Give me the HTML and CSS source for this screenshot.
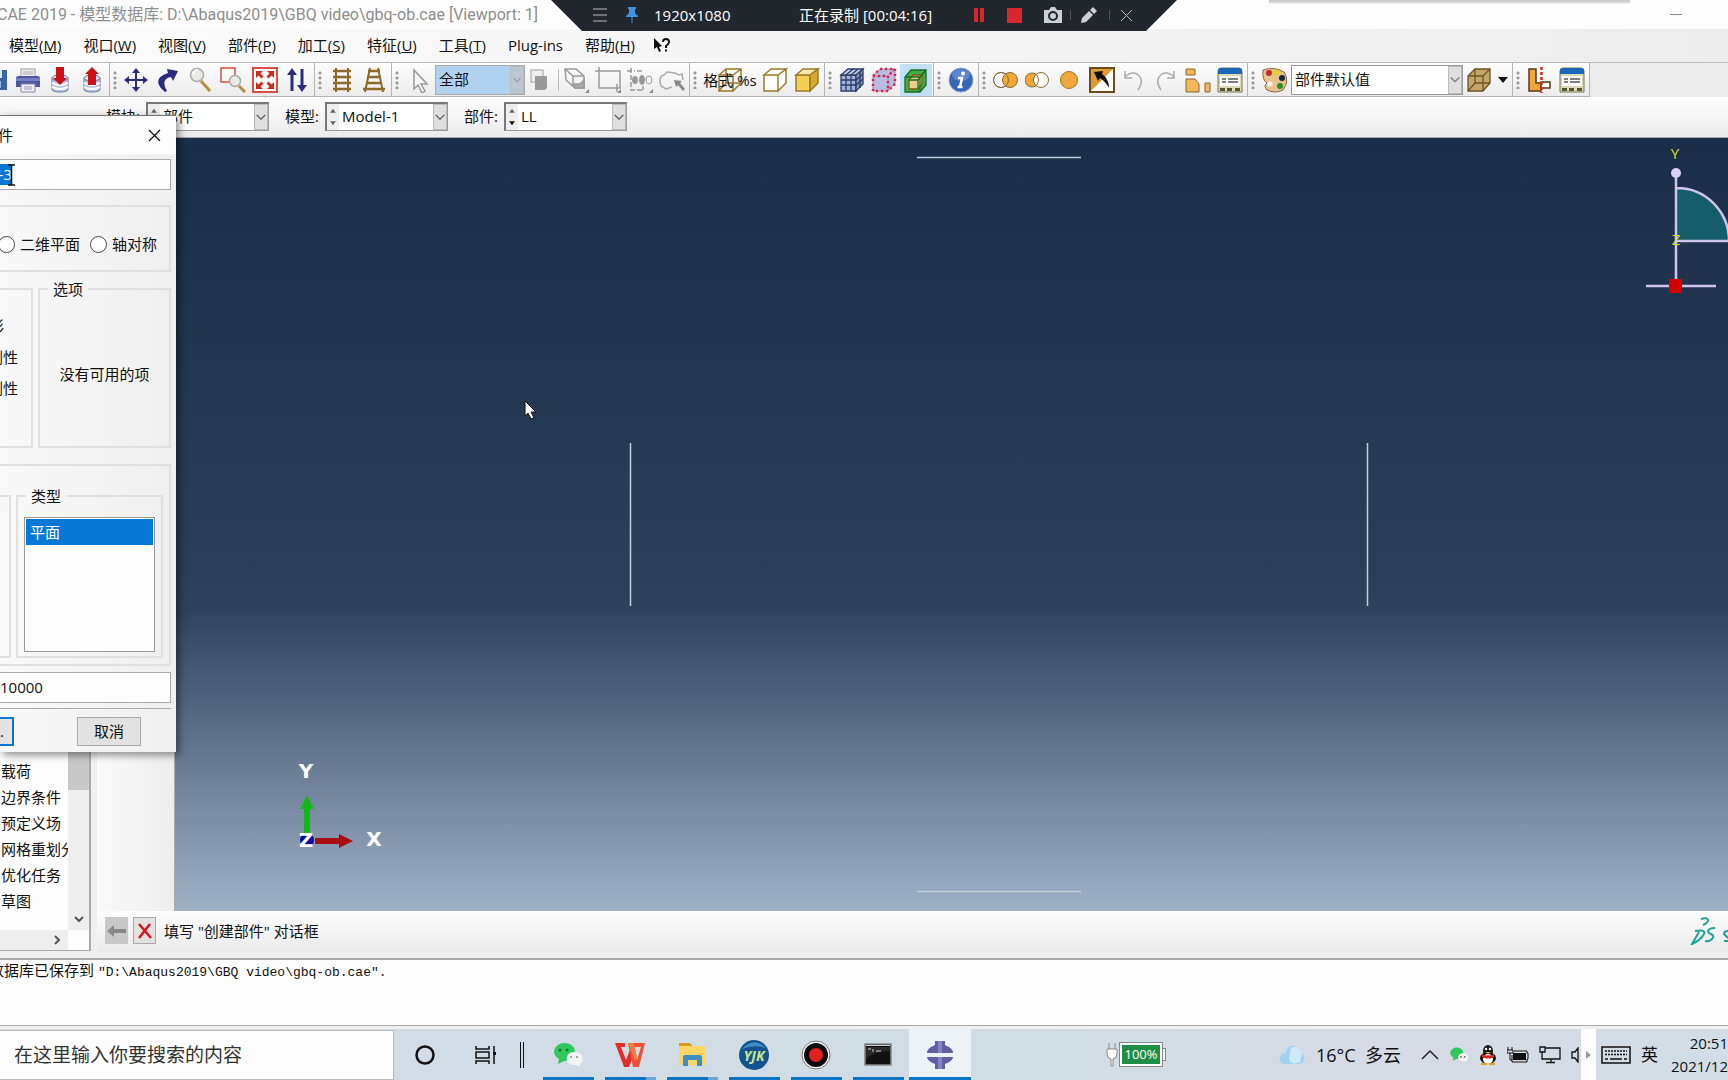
FILE: index.html
```html
<!DOCTYPE html>
<html lang="zh-CN">
<head>
<meta charset="utf-8">
<title>Abaqus/CAE 2019</title>
<link rel="stylesheet" href="styles.css">
</head>
<body>
<header class="titlebar">
  <h1 class="title">CAE 2019 - 模型数据库: D:\Abaqus2019\GBQ video\gbq-ob.cae [Viewport: 1]</h1>
  <button class="minimise" aria-label="最小化"><svg width="60" height="16" viewBox="0 0 60 16"><path d="M1 7.500h12M59.500 3v10" stroke="#888" fill="none"/></svg></button>
</header>
<nav class="menubar">
  <button>模型(<u>M</u>)</button><button>视口(<u>W</u>)</button><button>视图(<u>V</u>)</button><button>部件(<u>P</u>)</button><button>加工(<u>S</u>)</button><button>特征(<u>U</u>)</button><button>工具(<u>T</u>)</button><button>Plug-ins</button><button>帮助(<u>H</u>)</button>
  <button aria-label="上下文帮助"><svg width="18" height="16" viewBox="0 0 18 16"><path d="M1 1v11l3-2 2 5 2-1-2-4 3-1z" fill="#111"/><path d="M10 5q0-3 3-3t3 3q0 2-3 4v2M13 12.500v2" stroke="#111" stroke-width="2" fill="none"/></svg></button>
</nav>

<div class="toolbar">
  <div class="group first">
    <button aria-label="保存"><svg viewBox="0 0 26 26"><path d="M2 3h22v20H2z" fill="#3c62a8"/><path d="M7 3h12v8H7z" fill="#dde6f4"/><path d="M6 14h12v7H6z" fill="#9db4da"/></svg></button>
    <button aria-label="打印"><svg viewBox="0 0 26 26"><path d="M6 2h14v8H6z" fill="#eee" stroke="#999"/><path d="M8 5h10M8 7h10" stroke="#aaa"/><path d="M1 11q0-2 3-2h18q3 0 3 2v9H1z" fill="#4d56a0"/><path d="M1 11h24v3H1z" fill="#777dc0"/><path d="M6 17h14v8H6z" fill="#eef" stroke="#889"/><path d="M9 20h8M9 22h8" stroke="#99a"/></svg></button>
    <button aria-label="导入"><svg viewBox="0 0 26 26"><path d="M5 11v11q0 3 8 3t8-3V11z" fill="#b9c8df" stroke="#6a7ba0"/><path d="M5 16q8 4 16 0M5 20q8 4 16 0" stroke="#fff" stroke-width="2" fill="none"/><ellipse cx="13" cy="11" rx="8" ry="3" fill="#dbe4f1" stroke="#6a7ba0"/><path d="M9 0h8v11h3l-7 7-7-7h3z" fill="#cc1118"/></svg></button>
    <button aria-label="导出"><svg viewBox="0 0 26 26"><path d="M5 11v11q0 3 8 3t8-3V11z" fill="#b9c8df" stroke="#6a7ba0"/><path d="M5 16q8 4 16 0M5 20q8 4 16 0" stroke="#fff" stroke-width="2" fill="none"/><ellipse cx="13" cy="11" rx="8" ry="3" fill="#dbe4f1" stroke="#6a7ba0"/><path d="M13 0l7 7h-3v11H9V7H6z" fill="#cc1118"/></svg></button>
  </div>
  <div class="group">
    <i class="grip"></i>
    <button aria-label="平移"><svg viewBox="0 0 26 26"><path d="M12 4v18M3 13h18" stroke="#2b2c7c" stroke-width="2"/><path d="M12 1l4 5H8zM12 25l4-5H8zM0 13l5-4v8zM24 13l-5-4v8z" fill="#2b2c7c"/></svg></button>
    <button aria-label="旋转"><svg viewBox="0 0 26 26"><path d="M9 25Q-6 12 12 6L11 2l11 2-5 10-2-4Q4 12 11 24z" fill="#2b2c7c"/></svg></button>
    <button aria-label="缩放"><svg viewBox="0 0 26 26"><path d="M13 14l9 10" stroke="#b98b3c" stroke-width="3"/><circle cx="9" cy="8" r="6.500" fill="#e9eae6" stroke="#aaa" stroke-width="1.500"/><path d="M5 7q1-4 5-4" stroke="#fff" stroke-width="2" fill="none"/></svg></button>
    <button aria-label="框选缩放"><svg viewBox="0 0 26 26"><path d="M1 1h14v14H1z" fill="none" stroke="#dc4d42" stroke-width="1.500"/><path d="M19 19l6 6" stroke="#b98b3c" stroke-width="3"/><circle cx="15" cy="14" r="5.500" fill="#e9eae6" stroke="#aaa" stroke-width="1.500"/></svg></button>
    <button aria-label="适应窗口"><svg viewBox="0 0 26 26"><path d="M1 1h24v24H1z" fill="#fff" stroke="#dc4d42" stroke-width="2"/><path d="M4 4h7L8.500 6.500l3 3-2 2-3-3L4 11zM22 4h-7l2.500 2.500-3 3 2 2 3-3L22 11zM4 22h7l-2.500-2.500 3-3-2-2-3 3L4 15zM22 22h-7l2.500-2.500-3-3 2-2 3 3L22 15z" fill="#d2281d"/></svg></button>
    <button aria-label="循环视图"><svg viewBox="0 0 26 26"><path d="M8 6v18M18 2v17" stroke="#2b2c7c" stroke-width="3"/><path d="M8 1l5 7H3zM18 25l5-7H13z" fill="#2b2c7c"/></svg></button>
  </div>
  <div class="group">
    <i class="grip"></i>
    <button aria-label="平行"><svg viewBox="0 0 26 26"><path d="M7 1v24M19 1v24" stroke="#8c6a28" stroke-width="2"/><path d="M4 4h18M4 10h18M4 16h18M4 22h18" stroke="#8c6a28" stroke-width="2.500"/></svg></button>
    <button aria-label="透视"><svg viewBox="0 0 26 26"><path d="M9 1L4 25M17 1l5 24" stroke="#8c6a28" stroke-width="2"/><path d="M7 4h12M6 10h14M5 16h16M2 22h22" stroke="#8c6a28" stroke-width="2.500"/></svg></button>
  </div>
  <div class="group">
    <i class="grip"></i>
    <button aria-label="选择"><svg viewBox="0 0 26 26"><path d="M8 3v19l4-4 4 8 3-2-4-7h6z" fill="#f5f5f5" stroke="#999" stroke-width="1.500"/></svg></button>
    <span class="combo filter"><select aria-label="选择过滤"><option>全部</option></select><svg class="chev" viewBox="0 0 14 24"><path d="M3 10l4 4 4-4" fill="none" stroke="#999" stroke-width="1.500"/></svg></span>
    <button aria-label="遮挡"><svg viewBox="0 0 26 26"><path d="M3 3h12v12H3z" fill="#eee" stroke="#bbb" stroke-width="1.500"/><path d="M7 9h12v12l-2 2H7z" fill="#999"/></svg></button>
    <i class="sep"></i>
    <button aria-label="体选择"><svg viewBox="0 0 26 26" fill="none" stroke="#999" stroke-width="1.500"><path d="M2 2h11l8 7v12h-9l-9-8zM2 2l8 7h11M10 9v11"/><path d="M10 17h7l4-4v8h-9z" fill="#aaa"/><path d="M26 22v4h-4z" fill="#888" stroke="none"/></svg></button>
    <button aria-label="框形选择"><svg viewBox="0 0 26 26"><path d="M0 4h25v17M4 0v21h22M22 17v8" fill="none" stroke="#999" stroke-width="1.500"/><path d="M26 22v4h-4z" fill="#888"/></svg></button>
    <button aria-label="组选择"><svg viewBox="0 0 26 26"><path d="M0 4h8M4 1v22h12M10 4h6M16 23v-4" fill="none" stroke="#999" stroke-width="1.500" stroke-dasharray="5 2"/><ellipse cx="8" cy="13" rx="3" ry="4" fill="#999"/><ellipse cx="15" cy="13" rx="3" ry="5" fill="#999"/><ellipse cx="22" cy="13" rx="3" ry="4" fill="#fff" stroke="#999"/><path d="M26 22v4h-4z" fill="#888"/></svg></button>
    <button aria-label="套索"><svg viewBox="0 0 26 26"><path d="M2 19Q-1 9 5 8l3-3 8 1 4 2 3-1 1 6M2 19l5 3 6-2" fill="none" stroke="#aaa" stroke-width="1.500"/><path d="M15 13l8 1-2 2 5 6-2 2-5-6-2 2z" fill="#888"/></svg></button>
  </div>
  <div class="group">
    <i class="grip"></i>
    <button class="format" aria-label="线框"><svg viewBox="0 0 26 26" fill="none" stroke="#9b7b2c" stroke-width="1.500"><path d="M2 8h14v16H2zM9 2h15v14H9zM2 8l7-6M16 8l8-6M16 24l8-8M2 24l7-8"/></svg><span>格式 %s</span></button>
    <button aria-label="隐藏线"><svg viewBox="0 0 26 26" fill="#fff" stroke="#9b7b2c" stroke-width="1.500"><path d="M2 8h14v16H2zM2 8l7-6h15l-8 6zM24 2v14l-8 8V8z"/></svg></button>
    <button aria-label="阴影"><svg viewBox="0 0 26 26" stroke="#9b7b2c" stroke-width="1.500"><path d="M2 8h14v16H2z" fill="#f5cf55"/><path d="M2 8l7-6h15l-8 6z" fill="#fae9a5"/><path d="M24 2v14l-8 8V8z" fill="#d8a82e"/></svg></button>
  </div>
  <div class="group">
    <i class="grip"></i>
    <button aria-label="网格"><svg viewBox="0 0 26 26" stroke="#2d3d66" stroke-width="1.300"><path d="M2 8h15v16H2z" fill="#9fb3dc"/><path d="M2 8l7-6h15l-7 6z" fill="#c3d0ec"/><path d="M24 2v15l-7 7V8z" fill="#8095c4"/><path d="M7 8v16M12 8v16M2 13h15l7-6M2 18h15l7-6M7 8l7-6M12 8l7-6M21 5v16" fill="none"/></svg></button>
    <button aria-label="种子"><svg viewBox="0 0 26 26"><path d="M2 9l7-7h15v15l-7 7H2z" fill="#b5bde2"/><path d="M2 9h15v15H2zM2 9l7-7h15l-7 7M24 2v15l-7 7" fill="none" stroke="#d06a90"/><path d="M2 9h15v15H2zM2 9l7-7h15l-7 7M24 2v15l-7 7" fill="none" stroke="#c92950" stroke-width="2.500" stroke-dasharray="2 3"/></svg></button>
    <button class="on" aria-label="几何"><svg viewBox="0 0 26 26" stroke="#1b6a22" stroke-width="1.300"><path d="M2 10l6-7h15v15l-6 7H2z" fill="#3fae43"/><path d="M6 13l4-5h9v9l-4 5H6z" fill="#e7cf83" stroke="#7c5a1a"/><path d="M6 13h9v9M15 13l4-5M2 10h15v15M17 10l6-7" fill="none"/></svg></button>
  </div>
  <div class="group">
    <i class="grip"></i>
    <button aria-label="信息"><svg viewBox="0 0 26 26"><circle cx="13" cy="13" r="12" fill="#3766b5" stroke="#8aa6d8"/><ellipse cx="13" cy="8" rx="9" ry="6" fill="#5c86cb"/><path d="M10 11h4l-2 9M9.500 20h5" stroke="#fff" stroke-width="2.500" fill="none"/><circle cx="15" cy="6.500" r="2" fill="#fff"/></svg></button>
  </div>
  <div class="group">
    <i class="grip"></i>
    <button aria-label="并集"><svg viewBox="0 0 26 26" stroke="#8a6a30"><circle cx="8" cy="13" r="7.500" fill="#fff"/><circle cx="17" cy="13" r="7.500" fill="#f0a83a"/><circle cx="8" cy="13" r="7.500" fill="none"/></svg></button>
    <button aria-label="差集"><svg viewBox="0 0 26 26" stroke="#8a6a30"><circle cx="7" cy="13" r="7" fill="#f0a83a"/><circle cx="16" cy="13" r="7.500" fill="#fff"/><path d="M11 7q5 6 0 12" fill="none"/></svg></button>
    <button aria-label="全部显示"><svg viewBox="0 0 26 26"><circle cx="12" cy="13" r="8.500" fill="#f0a83a" stroke="#a87426"/></svg></button>
    <button aria-label="替换"><svg viewBox="0 0 26 26"><path d="M1 1h24v24H1z" fill="#fff" stroke="#6b4b1d" stroke-width="2"/><path d="M2 2h22L2 24z" fill="#e09a32"/><path d="M5 5l9-1-1 3q7 5 7 14-4-7-9-10l-2 3z" fill="#111"/></svg></button>
    <button aria-label="撤销"><svg viewBox="0 0 26 26" fill="none" stroke="#aaa" stroke-width="1.500"><path d="M4 4v7h7M4 10q6-6 12-3 8 6 1 16"/></svg></button>
    <button aria-label="重做"><svg viewBox="0 0 26 26" fill="none" stroke="#aaa" stroke-width="1.500"><path d="M21 4v7h-7M21 10q-6-6-12-3-8 6-1 16"/></svg></button>
    <button aria-label="部件显示"><svg viewBox="0 0 26 26" fill="#f3b65a" stroke="#8a6a30"><path d="M1 2h9v6H1zM1 12h9l4 5v8H1zM20 16h5v9h-5z"/></svg></button>
    <button aria-label="管理器"><svg viewBox="0 0 26 26"><path d="M1 4q0-3 3-3h18q3 0 3 3v21H1z" fill="#ddd9b8" stroke="#777753"/><path d="M1 7V4q0-3 3-3h18q3 0 3 3v3z" fill="#1c68b8"/><path d="M3 9h20v10H3z" fill="#fff"/><path d="M5 12h4M11 12h10M5 15h4M11 15h10" stroke="#555" stroke-width="1.500"/><path d="M3 21h5v3H3zM10 21h5v3h-5zM18 21h5v3h-5z" fill="#555530"/></svg></button>
  </div>
  <div class="group">
    <i class="grip"></i>
    <button aria-label="颜色"><svg viewBox="0 0 26 26"><path d="M1 3Q12-1 22 5q6 9-1 18-8 4-16 0-4-4 0-7-5-3-4-13z" fill="#e6c28d" stroke="#8a6a40"/><circle cx="7" cy="6" r="3" fill="#d32222"/><circle cx="14" cy="5.500" r="3" fill="#e8d02c"/><circle cx="20" cy="11" r="3" fill="#17254f"/><circle cx="18" cy="19" r="3" fill="#23902c"/><circle cx="8" cy="17" r="2.500" fill="#fff"/></svg></button>
    <span class="combo colour"><select aria-label="颜色映射"><option>部件默认值</option></select><svg class="chev" viewBox="0 0 14 24"><path d="M2 9l5 5 5-5" fill="none" stroke="#777" stroke-width="1.500"/></svg></span>
    <button aria-label="透明度"><svg viewBox="0 0 26 26" fill="#c2a66a" stroke="#6d5423" stroke-width="1.300"><path d="M2 9l7-7h15v14l-7 8H2z"/><path d="M2 9h15v15M17 9l7-7M9 2v14h15M9 16l-7 8" fill="none"/></svg></button>
    <button class="more" aria-label="更多"><svg width="10" height="6" viewBox="0 0 10 6"><path d="M0 0h10L5 6z" fill="#111"/></svg></button>
  </div>
  <div class="group">
    <i class="grip"></i>
    <button aria-label="基准"><svg viewBox="0 0 26 26"><path d="M2 2h7v14h5v8H2z" fill="#f0a83a" stroke="#553a12" stroke-width="1.500"/><path d="M14 15h9v6h-9z" fill="#fff" stroke="#553a12" stroke-width="1.500"/><path d="M14.500 0v26" stroke="#d22" stroke-width="2.500" stroke-dasharray="3 2"/></svg></button>
    <button aria-label="特征管理器"><svg viewBox="0 0 26 26"><path d="M1 4q0-3 3-3h18q3 0 3 3v21H1z" fill="#ddd9b8" stroke="#777753"/><path d="M1 7V4q0-3 3-3h18q3 0 3 3v3z" fill="#1c68b8"/><path d="M3 9h20v10H3z" fill="#fff"/><path d="M5 12h4M11 12h10M5 15h4M11 15h10" stroke="#555" stroke-width="1.500"/><path d="M3 21h5v3H3zM10 21h5v3h-5zM18 21h5v3h-5z" fill="#555530"/></svg></button>
  </div>
</div>

<div class="context">
  <label for="module">模块:</label>
  <span class="combo spin"><svg class="spinner" viewBox="0 0 12 27"><path d="M3 9l3-4 3 4zM3 18l3 4 3-4z" fill="#666"/></svg><select id="module"><option>部件</option></select><svg class="chev" viewBox="0 0 14 27"><path d="M2 11l5 5 5-5" fill="none" stroke="#555" stroke-width="1.500"/></svg></span>
  <label for="model">模型:</label>
  <span class="combo spin"><svg class="spinner" viewBox="0 0 12 27"><path d="M3 9l3-4 3 4zM3 18l3 4 3-4z" fill="#666"/></svg><select id="model"><option>Model-1</option></select><svg class="chev" viewBox="0 0 14 27"><path d="M2 11l5 5 5-5" fill="none" stroke="#555" stroke-width="1.500"/></svg></span>
  <label for="part">部件:</label>
  <span class="combo spin"><svg class="spinner" viewBox="0 0 12 27"><path d="M3 9l3-4 3 4z" fill="#666"/><path d="M3 18l3 4 3-4z" fill="#000"/></svg><select id="part"><option>LL</option></select><svg class="chev" viewBox="0 0 14 27"><path d="M2 11l5 5 5-5" fill="none" stroke="#555" stroke-width="1.500"/></svg></span>
</div>

<main class="work">
  <aside class="tree">
    <div class="tree-body">
      <ul><li>载荷</li><li>边界条件</li><li>预定义场</li><li>网格重划分</li><li>优化任务</li><li>草图</li></ul>
      <div class="vscroll"><div class="thumb"></div><svg width="12" height="8" viewBox="0 0 12 8"><path d="M2 1l4 4 4-4" fill="none" stroke="#555" stroke-width="2"/></svg></div>
    </div>
    <div class="hscroll"><svg width="8" height="12" viewBox="0 0 8 12"><path d="M1 2l4 4-4 4" fill="none" stroke="#555" stroke-width="2"/></svg></div>
  </aside>
  <section class="stage">
    <div class="stage-body">
      <div class="toolbox"></div>
      <div class="viewport">
        <svg class="scene" viewBox="0 0 1553 773" preserveAspectRatio="xMinYMin slice">
          <path d="M742 19.500h164M742 753.500h164M455.500 305v163M1192.500 305v163" stroke="#c3cedb" stroke-width="1.500"/>
          <g class="axis"><text x="131" y="640">Y</text><text x="199" y="708">X</text></g>
          <path d="M129 695v-24h-4l7-14 7 14h-4v24z" fill="#10b818"/><path d="M140 700h24v-4l14 7-14 7v-4h-24z" fill="#a80d12"/>
          <circle cx="132" cy="702" r="7" fill="#0a0a9c"/><g class="axis"><text x="131" y="709">Z</text></g>
          <path d="M1501 50a52 53 0 0 1 53 53h-53z" fill="#165d6a"/>
          <path d="M1501 35v110M1501 50a52 53 0 0 1 53 53h-53M1471 148h70" stroke="#cfc4ee" stroke-width="2.500" fill="none"/>
          <circle cx="1501" cy="35" r="5" fill="#dccff5"/><path d="M1494 141h13v14h-13z" fill="#d40000"/>
          <g class="compass"><text x="1500" y="21">Y</text><text x="1501" y="107">Z</text></g>
          <path d="M350 263v15l3-3 3 6 3-1-3-6h5z" fill="#fff" stroke="#111"/>
        </svg>
      </div>
    </div>
    <div class="prompt">
      <button class="back" aria-label="上一步"><svg width="20" height="14" viewBox="0 0 20 14"><path d="M0 7l7-6v4h12v4H7v4z" fill="#888"/></svg></button>
      <button class="cancel" aria-label="取消过程"><svg width="16" height="16" viewBox="0 0 16 16"><path d="M2 1l12 14M13 1L2 15" stroke="#d8121c" stroke-width="2.500"/></svg></button>
      <span class="hint">填写 "创建部件" 对话框</span>
      <svg class="brand" width="38" height="28" viewBox="0 0 38 28" fill="none" stroke="#1aa596" stroke-width="2"><path d="M11 2q6-2 7 1 0 3-5 5M5 14q11-2 9 3-3 6-12 10l7-12M25 11q-6 0-7 3 0 2 3 3 4 2 1 5-3 3-7 2M38 14q-4 0-4 3l4 4M34 24h4"/></svg>
    </div>
  </section>
</main>

<section class="messages">数据库已保存到 <span>"D:\Abaqus2019\GBQ video\gbq-ob.cae".</span></section>

<footer class="taskbar">
  <input class="search" type="text" aria-label="搜索" placeholder="在这里输入你要搜索的内容">
  <button class="slot" aria-label="Cortana"><svg width="22" height="22" viewBox="0 0 22 22"><circle cx="11" cy="11" r="8.500" fill="none" stroke="#111" stroke-width="2.500"/></svg></button>
  <button class="slot" aria-label="任务视图"><svg width="22" height="22" viewBox="0 0 22 22" fill="none" stroke="#111" stroke-width="1.500"><path d="M1 2v3h13V2M1 20v-3h13v3M1 8h13v6H1zM19 2v18"/><path d="M18 8h3v3h-3z" fill="#111" stroke="none"/></svg></button>
  <i class="bars"></i>
  <button class="app" aria-label="微信"><svg width="32" height="32" viewBox="0 0 32 32"><path d="M12 4c15 0 14 18 0 18l-6 3 1-5C-3 14 4 4 12 4z" fill="#2ec95c"/><circle cx="8" cy="11" r="1.500" fill="#176b31"/><circle cx="15" cy="11" r="1.500" fill="#176b31"/><path d="M22 13c11 0 10 10 6 12v3l-4-2c-12 1-12-13-2-13z" fill="#f4f4f4"/><circle cx="19" cy="18" r="1" fill="#888"/><circle cx="25" cy="18" r="1" fill="#888"/></svg></button>
  <button class="app two" aria-label="WPS"><svg width="32" height="32" viewBox="0 0 32 32"><path d="M1 4h10v4H7l5 13 4-10 3 7-4 10h-5z" fill="#df3028"/><path d="M14 4h6l3 17 4-13h-6l-2-4h12l-6 24h-6z" fill="#f04e35"/><path d="M14 4h6l3 15-2 3z" fill="#f47a3c"/></svg></button>
  <button class="app two" aria-label="文件资源管理器"><svg width="32" height="32" viewBox="0 0 32 32"><path d="M3 4h11l3 4H3z" fill="#d49b22"/><path d="M3 7h26v19H3z" fill="#fdd566"/><path d="M7 27v-9q0-2 2-2h15q2 0 2 2v9h-5v-6h-9v6z" fill="#3e8fc6"/></svg></button>
  <button class="app" aria-label="YJK"><svg width="32" height="32" viewBox="0 0 32 32"><circle cx="16" cy="16" r="15" fill="#14528f"/><path d="M4 10Q16-3 28 9q-12-4-24 1z" fill="#3d8cc4"/><text class="yjk" x="16" y="22">YJK</text></svg></button>
  <button class="app" aria-label="录屏"><svg width="32" height="32" viewBox="0 0 32 32"><circle cx="16" cy="16" r="14" fill="#fff" stroke="#777"/><circle cx="16" cy="16" r="12" fill="#0c0c0c"/><circle cx="16" cy="16" r="7" fill="#e21f1f"/></svg></button>
  <button class="app" aria-label="命令提示符"><svg width="32" height="32" viewBox="0 0 32 32"><path d="M3 5h26v21H3z" fill="#111" stroke="#888" stroke-width="1.500"/><path d="M4 6h24v1H4z" fill="#ccc"/><path d="M6 10h3M11 10v3M14 12h5" stroke="#eee" stroke-width="1.500"/><path d="M4 20Q12 12 28 12V8H4z" fill="#444" opacity=".5"/></svg></button>
  <button class="app active" aria-label="Abaqus"><svg width="32" height="32" viewBox="0 0 32 32"><path d="M11 2h10v4q8 3 8 8H3q0-5 8-8zM3 18h26q0 4-8 7v5H11v-5q-8-3-8-7z" fill="#625fa4"/><path d="M14 2h4v12h-4zM14 18h4v12h-4z" fill="#8684bf"/></svg></button>
  <div class="battery"><svg width="12" height="24" viewBox="0 0 12 24"><path d="M3 0v6M9 0v6M1 6h10v5q0 4-4 5v7H5v-7q-4-1-4-5z" fill="#fff" stroke="#888"/></svg><span>100%</span><b></b></div>
  <div class="tray">
    <svg width="28" height="26" viewBox="0 0 28 26"><path d="M6 22q-6-2-4-7 1-4 5-4 3-9 10-7 6 2 6 7 4 3 3 7-1 4-5 4z" fill="#a0d2f1"/><path d="M13 6q9-4 11 6l-2 8q-9 4-11-3z" fill="#cfe9fb"/></svg>
    <span class="weather">16°C&nbsp; 多云</span>
    <svg class="up" width="18" height="12" viewBox="0 0 18 12"><path d="M1 10l8-8 8 8" fill="none" stroke="#222" stroke-width="1.500"/></svg>
    <svg width="20" height="20" viewBox="0 0 32 32"><path d="M12 4c15 0 14 18 0 18l-6 3 1-5C-3 14 4 4 12 4z" fill="#2ec95c"/><path d="M22 13c11 0 10 10 6 12v3l-4-2c-12 1-12-13-2-13z" fill="#f4f4f4"/><circle cx="19" cy="19" r="1.500" fill="#666"/><circle cx="25" cy="19" r="1.500" fill="#666"/></svg>
    <svg width="18" height="20" viewBox="0 0 18 20"><ellipse cx="9" cy="6" rx="5" ry="6" fill="#111"/><ellipse cx="9" cy="13" rx="8" ry="6" fill="#111"/><ellipse cx="9" cy="14" rx="5" ry="5" fill="#fff"/><path d="M3 9q6 3 12 0v3q-6 3-12 0z" fill="#d8201c"/><path d="M2 18h6v2H2zM10 18h6v2h-6z" fill="#e9a020"/><path d="M6 7h6l-3 2z" fill="#e9a020"/><circle cx="7" cy="4" r="1.300" fill="#fff"/><circle cx="11" cy="4" r="1.300" fill="#fff"/></svg>
    <svg width="22" height="16" viewBox="0 0 22 16"><path d="M1 0v3M5 0v3M0 3h6v3H0zM3 6v7h2" fill="none" stroke="#111"/><path d="M6 6h13v7H6z" fill="#111"/><path d="M7 4h13v2h1v6h-1v3H5V8" fill="none" stroke="#111"/></svg>
    <svg width="22" height="18" viewBox="0 0 22 18"><path d="M6 2h15v11H3V8M12 13v3M7 16.500h9M1 1h5v5H1zM3 6v3" fill="none" stroke="#111" stroke-width="1.300"/></svg>
    <svg class="speaker" width="8" height="16" viewBox="0 0 8 16"><path d="M7 1v14L4 11H1V5h3z" fill="none" stroke="#111" stroke-width="1.300"/></svg>
    <span class="strip"><svg width="5" height="8" viewBox="0 0 5 8"><path d="M0 0l5 4-5 4z" fill="#999"/></svg></span>
    <svg width="30" height="18" viewBox="0 0 30 18"><path d="M1 1h28v16H1z" fill="none" stroke="#111" stroke-width="1.500"/><path d="M4 5h22M4 8.500h22" stroke="#111" stroke-width="1.500" stroke-dasharray="2 1"/><path d="M4 13h3M9 13h12M23 13h3" stroke="#111" stroke-width="1.500"/></svg>
    <span class="ime">英</span>
    <time class="clock"><span>20:51</span><span>2021/12</span></time>
  </div>
</footer>

<form class="dialog">
  <header class="dialog-head"><h2>件</h2><button type="button" aria-label="关闭"><svg width="13" height="13" viewBox="0 0 13 13"><path d="M1 1l11 11M12 1L1 12" stroke="#111" stroke-width="1.300"/></svg></button></header>
  <div class="field name"><mark>-3</mark><input type="text" aria-label="名称"><svg class="ibeam" width="7" height="22" viewBox="0 0 7 22"><path d="M0 1h7M3.500 1v20M0 21h7" stroke="#111" stroke-width="1.500"/></svg></div>
  <fieldset class="space">
    <label><input type="radio" name="space">二维平面</label>
    <label><input type="radio" name="space">轴对称</label>
  </fieldset>
  <div class="pair">
    <fieldset class="cut kinds"><span>形</span><span>刚性</span><span>刚性</span></fieldset>
    <fieldset class="options"><legend>选项</legend><p>没有可用的项</p></fieldset>
  </div>
  <div class="base">
    <div class="shape"></div>
    <fieldset class="type"><legend>类型</legend><ul class="list"><li>平面</li></ul></fieldset>
  </div>
  <input class="field size" type="text" aria-label="大约尺寸" value="10000">
  <hr>
  <div class="actions"><button type="submit" class="go">.</button><button type="button" class="no">取消</button></div>
</form>

<div class="recorder">
  <svg width="14" height="16" viewBox="0 0 14 16"><path d="M0 2h14M0 8h14M0 14h14" stroke="#bbb"/></svg>
  <svg class="pin" width="12" height="16" viewBox="0 0 12 16"><path d="M2 0h8v2H9v4l3 3v1H0V9l3-3V2H2zM5.500 10h1v6h-1z" fill="#3e92e0"/></svg>
  <span class="res">1920x1080</span>
  <span class="state">正在录制 [00:04:16]</span>
  <button class="pause" aria-label="暂停"><svg width="12" height="16" viewBox="0 0 12 16"><path d="M1 1h4v14H1zM7 1h4v14H7z" fill="#d8262c"/></svg></button>
  <button class="stop" aria-label="停止"><svg width="15" height="15" viewBox="0 0 15 15"><path d="M0 0h15v15H0z" fill="#d8262c"/></svg></button>
  <button class="camera" aria-label="截图"><svg width="18" height="16" viewBox="0 0 18 16"><path d="M0 3h5l2-3h4l2 3h5v13H0z" fill="#ccd0d3"/><circle cx="9" cy="9" r="4" fill="none" stroke="#22272e" stroke-width="2"/></svg></button>
  <i></i>
  <button class="pen" aria-label="画笔"><svg width="16" height="16" viewBox="0 0 16 16"><path d="M0 16l1-5 7-7 4 4-7 7zM9 3l3-3 4 4-3 3z" fill="#ccd0d3"/></svg></button>
  <i></i>
  <button class="end" aria-label="关闭录制"><svg width="13" height="13" viewBox="0 0 13 13"><path d="M1 1l11 11M12 1L1 12" stroke="#bbb"/></svg></button>
</div>
<div class="edge"></div>
</body>
</html>
```
FILE: styles.css
```css
* { box-sizing: border-box; }
body {
  margin: 0;
  min-height: 100vh;
  display: flex;
  flex-direction: column;
  position: relative;
  overflow: hidden;
  background: #f0f0f0;
  color: #111;
  font: 15px/20px "Open Sans", "Noto Sans CJK SC", sans-serif;
}
button { padding: 0; border: 0; background: none; font: inherit; color: inherit; }
svg { display: block; flex: none; }
select, input { font: inherit; color: inherit; }
ul { margin: 0; padding: 0; list-style: none; }

.titlebar { height: 29px; display: flex; align-items: center; justify-content: space-between; background: #fdfdfd; }
.title { margin: 0 0 0 -3px; font: 400 16px/20px Roboto, "Noto Sans CJK SC", sans-serif; color: #8d8d8d; white-space: nowrap; }
.minimise { margin-right: -1px; }

.menubar { height: 33px; padding: 0 0 2px 9px; display: flex; align-items: center; gap: 22px; background: linear-gradient(90deg, #fbfbfb, #ededed); }
.menubar button:last-child { margin-left: -4px; }

.toolbar { height: 35px; display: flex; border-top: 1px solid #bbb; background: #ececec; }
.group { display: flex; align-items: center; flex: none; padding-right: 1px; border-right: 1px solid #b4b4b4; border-bottom: 1px solid #b4b4b4; background: linear-gradient(#fdfdfd, #ececec); }
.first { width: 110px; justify-content: flex-end; overflow: hidden; }
.group button { width: 32px; height: 32px; display: grid; place-items: center; flex: none; }
.group button svg { width: 26px; height: 26px; }
.group .on { background: #c0e0f7; }
.group .format { width: 58px; }
.format svg, .format span { grid-area: 1 / 1; white-space: nowrap; }
.group .more { width: 16px; }
.group .more svg { width: 10px; height: 6px; }
.grip { width: 11px; height: 18px; flex: none; background: radial-gradient(circle at 5px 2px, #999 1px, transparent 2px) 0 0 / 11px 5px; }
.sep { width: 1px; height: 22px; margin: 0 1px; background: #bbb; }

.combo { display: flex; align-items: stretch; border: 1px solid #999; background: #fff; }
.combo select { flex: 1; min-width: 0; padding: 0 3px 1px; border: 0; background: none; appearance: none; }
.combo .chev { width: 14px; background: #dedede; border: 1px solid #bbb; }
.filter { width: 90px; height: 30px; background: #b0d1f0; border-color: #aaa; }
.filter .chev { background: #bcc6d0; }
.colour { width: 172px; height: 30px; }

.context { height: 41px; padding: 0 0 2px 106px; display: flex; align-items: center; gap: 6px; background: linear-gradient(#fdfdfd, #ebebeb); border-bottom: 1px solid #aaa; }
.context label { width: 34px; white-space: nowrap; }
.context .spin { width: 123px; height: 29px; margin-right: 10px; border-top: 2px solid #777; border-left: 2px solid #777; }
.spinner { width: 12px; background: #eee; }

.work { flex: 1; display: flex; gap: 6px; min-height: 0; }
.tree { width: 91px; margin-bottom: 1px; display: flex; flex-direction: column; background: #fdfdfd; border-right: 2px solid #aaa; border-bottom: 1px solid #aaa; }
.tree-body { flex: 1; display: flex; align-items: stretch; }
.tree ul { width: 68px; padding: 0 0 16px 1px; display: flex; flex-direction: column; justify-content: flex-end; overflow: hidden; }
.tree li { height: 26px; line-height: 26px; white-space: nowrap; overflow: hidden; }
.vscroll { flex: 1; display: flex; flex-direction: column; justify-content: space-between; align-items: center; padding-bottom: 6px; background: #eee; }
.thumb { width: 100%; height: 83%; background: #c8c8c8; }
.hscroll { width: 68px; height: 20px; padding-right: 6px; display: flex; align-items: center; justify-content: flex-end; background: #eee; }
.stage { flex: 1; display: flex; flex-direction: column; min-width: 0; }
.stage-body { flex: 1; display: flex; }
.toolbox { width: 78px; border-right: 1px solid #aaa; background: linear-gradient(90deg, #fafafa, #ededed); }
.viewport { flex: 1; position: relative; overflow: hidden; background: linear-gradient(#1a2e49 0%, #2c3e57 56%, #30425c 61%, #9fb1c7 100%); }
.scene { position: absolute; inset: 0; width: 100%; height: 100%; }
.scene text { text-anchor: middle; }
.axis { font: 700 20px "DejaVu Sans", sans-serif; fill: #fff; }
.compass { font: 15px "Open Sans", sans-serif; fill: #dede20; }
.prompt { height: 41px; padding: 0 0 2px 8px; display: flex; align-items: center; gap: 5px; background: linear-gradient(#fdfdfd, #eaeaea); }
.prompt button { width: 23px; height: 27px; display: grid; place-items: center; }
.prompt .back { background: #c8c8c8; }
.prompt .cancel { background: #e2e2e2; border: 1px solid #aaa; }
.hint { margin-left: 3px; }
.brand { margin-left: auto; }

.messages { height: 68px; margin: 6px 0 3px; padding: 0; border-top: 2px solid #aaa; border-bottom: 1px solid #aaa; background: #fdfdfd; white-space: nowrap; text-indent: -11px; }
.messages span { font: 13px/20px "Liberation Mono", monospace; }

.taskbar { height: 51px; display: flex; align-items: center; background: linear-gradient(90deg, #d3dae6, #d0dde5 60%, #d6dae4 80%, #d2dde5); }
.search { width: 394px; height: 50px; padding: 0 14px; border: 1px solid #bbb; border-left: 0; background: #fdfdfd; font-size: 19px; }
.search::placeholder { color: #333; opacity: 1; }
.slot { width: 61px; height: 100%; display: grid; place-items: center; }
.bars { width: 4px; height: 26px; margin: 0 13px 0 4px; border: solid #111; border-width: 0 1px; }
.app { width: 62px; height: 100%; padding-top: 2px; display: flex; flex-direction: column; align-items: center; justify-content: space-between; }
.app::before { content: ""; height: 2px; }
.app::after { content: ""; width: 51px; height: 3px; background: #0a76c4; }
.two::after { background: linear-gradient(90deg, #0a76c4 80%, #6da5d5 80%); }
.active { background: #edf2f6; }
.active::after { width: 100%; }
.yjk { font: italic 700 14px "Open Sans", sans-serif; fill: #c8e88c; text-anchor: middle; }
.battery { margin-left: 135px; display: flex; align-items: center; }
.battery span { width: 42px; height: 23px; margin-left: 2px; border: 2px solid #fff; outline: 1px solid #888; background: #1f8f46; color: #fff; font-size: 13px; line-height: 19px; text-align: center; }
.battery b { width: 4px; height: 13px; background: #fff; border: 1px solid #888; }
.tray { height: 100%; margin-left: auto; display: flex; align-items: center; gap: 10px; }
.weather { font-size: 18px; white-space: nowrap; }
.up { margin-left: 10px; }
.speaker { margin-right: -8px; }
.strip { width: 15px; height: 100%; margin-right: -5px; display: grid; place-items: center; background: #fdfdfd; }
.ime { font-size: 17px; }
.clock { width: 60px; display: flex; flex-direction: column; align-items: flex-end; gap: 3px; }

.dialog { position: absolute; left: 0; top: 115px; width: 176px; height: 637px; background: linear-gradient(90deg, #f8f8f8, #efefef); border-top: 1px solid #777; box-shadow: 3px 3px 8px rgba(0, 0, 0, .45); }
.dialog-head { height: 38px; padding-right: 15px; display: flex; align-items: center; justify-content: space-between; background: #fdfdfd; }
.dialog-head h2 { margin: 0 0 0 -2px; font-size: 15px; font-weight: 400; }
.field { width: 171px; height: 31px; border: 1px solid #aaa; border-left: 0; background: #fdfdfd; }
.name { margin-top: 5px; display: flex; align-items: center; }
.name mark { width: 12px; height: 21px; display: flex; justify-content: flex-end; background: #0878d7; color: #fff; }
.name input { width: 1px; flex: 1; order: 3; border: 0; background: none; }
.ibeam { margin-left: -4px; }
fieldset { min-width: 0; margin: 0; padding: 0; border: 2px solid #dfdfdf; }
legend { padding: 0 5px; margin-left: 8px; line-height: 18px; }
.space { width: 171px; height: 67px; margin-top: 15px; padding-top: 11px; border-left: 0; display: flex; align-items: center; gap: 10px; }
.space label { display: flex; align-items: center; gap: 5px; white-space: nowrap; }
.space label:first-child { margin-left: -2px; }
.space input { appearance: none; width: 17px; height: 17px; margin: 0; border: 1px solid #444; border-radius: 50%; background: #fff; }
.pair { width: 171px; height: 168px; margin-top: 8px; display: flex; align-items: flex-end; gap: 5px; }
.cut { border-left: 0; }
.kinds { width: 33px; height: 160px; padding-top: 21px; overflow: hidden; }
.kinds span { display: flex; justify-content: flex-end; width: 18px; line-height: 31px; white-space: nowrap; }
.kinds span:first-child { width: 4px; }
.options { flex: 1; height: 168px; }
.options p { margin: 66px 0 0; text-align: center; }
.base { width: 171px; height: 202px; margin-top: 16px; padding: 0 6px 6px 0; display: flex; align-items: flex-end; gap: 5px; border: 2px solid #dfdfdf; border-left: 0; }
.shape { width: 11px; height: 163px; border: 2px solid #dfdfdf; border-left: 0; }
.type { flex: 1; height: 171px; padding: 12px 6px 5px; }
.type legend { margin-left: 2px; }
.list { height: 135px; padding: 1px; border: 1px solid #999; background: #fdfdfd; }
.list li { height: 26px; padding-left: 4px; line-height: 26px; background: #0878d7; color: #fff; }
.size { display: block; margin-top: 6px; padding: 0 0 2px; }
.dialog hr { width: 171px; height: 1px; margin: 5px 0 8px; border: 0; background: #aaa; }
.actions { display: flex; align-items: center; gap: 63px; }
.actions button { height: 29px; padding-bottom: 1px; background: #e2e2e2; border: 1px solid #aaa; }
.actions .go { width: 14px; border: 2px solid #0878d7; border-left: 0; text-align: left; }
.actions .no { width: 64px; }

.recorder { position: absolute; top: 0; left: 50%; width: 626px; height: 31px; margin-left: -313px; padding: 0 0 1px 42px; display: flex; align-items: center; background: #22272e; color: #fff; clip-path: polygon(0 0, 100% 0, 595px 100%, 31px 100%); }
.pin { margin-left: 19px; }
.res { width: 145px; margin-left: 16px; }
.state { width: 174px; white-space: nowrap; }
.recorder i { width: 1px; height: 10px; background: #555; }
.stop { margin-left: 22px; }
.camera { margin: 0 8px 0 22px; }
.pen { margin: 0 12px 0 10px; }
.end { margin-left: 10px; }
.edge { position: absolute; top: 0; right: 98px; width: 361px; height: 2px; background: #ccc; box-shadow: 0 1px 2px #ccc; }
```
